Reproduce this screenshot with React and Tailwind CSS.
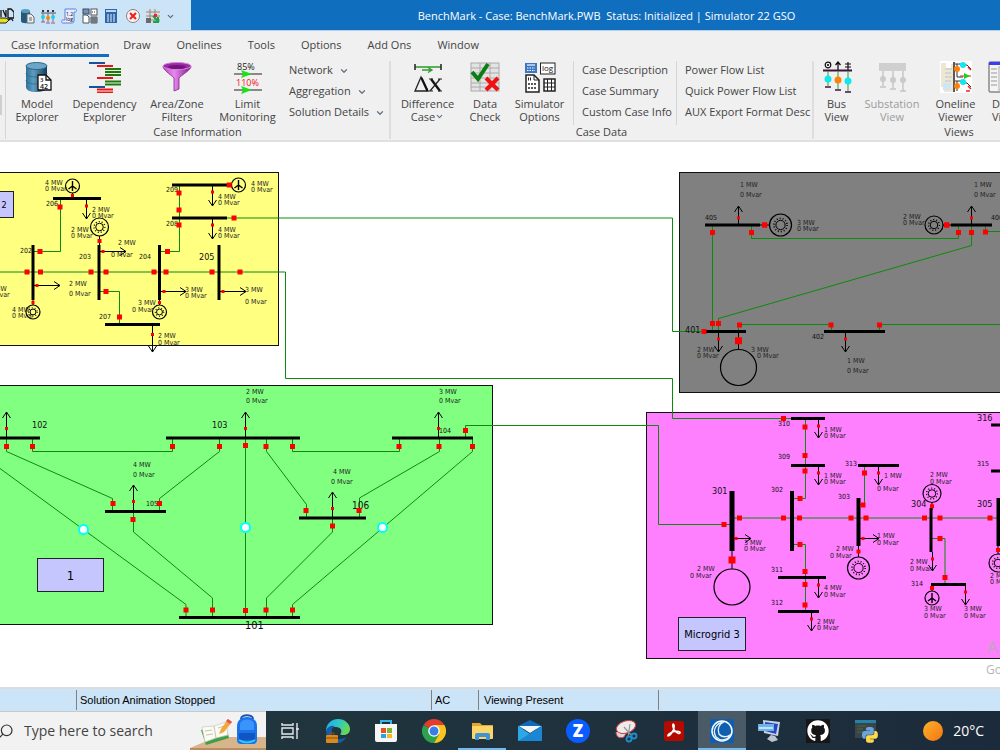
import React from "react";
import { ChevronDown, Search } from "lucide-react";
import { FaGithub } from "react-icons/fa";

/* ---------- ribbon icons ---------- */

function ModelIcon() {
  return (
    <svg viewBox="0 0 32 32" className="h-8 w-8">
      <defs>
        <linearGradient id="cyl" x1="0" x2="1">
          <stop offset="0" stopColor="#2f7199" />
          <stop offset=".35" stopColor="#5f9cc0" />
          <stop offset="1" stopColor="#123a57" />
        </linearGradient>
      </defs>
      <path d="M5 5v21c0 3 4 5 10 5s11-2 11-5V5z" fill="url(#cyl)" />
      <ellipse cx="15.500" cy="5" rx="10.500" ry="3.500" fill="#6ba6c8" stroke="#2b6588" />
      <path d="M5 12c0 3 5 4 10 4s11-1 11-4M5 19c0 3 5 4 10 4s11-1 11-4" fill="none" stroke="#2b6588" strokeWidth=".7" />
      <path d="M17 14h8l5 5v10H17z" fill="#fff" stroke="#111" strokeWidth="1.300" />
      <path d="M25 14v5h5" fill="none" stroke="#111" strokeWidth="1.300" />
      <text x="19" y="21" fontSize="6" fontWeight="600" fill="#111">3</text>
      <text x="19" y="28" fontSize="7" fontWeight="600" fill="#111">42</text>
    </svg>
  );
}

function DependencyIcon() {
  return (
    <svg viewBox="0 0 32 32" className="h-8 w-8">
      <path d="M0 2h16M0 26h16" stroke="#15539e" strokeWidth="2" />
      <path d="M8 5h16M8 17h16M8 28.500h16M8 31.500h16" stroke="#f01414" strokeWidth="2" />
      <path d="M16 8h16M16 11h16M16 14h16M16 20.500h16M16 23.500h16" stroke="#1f7a0c" strokeWidth="2" />
    </svg>
  );
}

function FunnelIcon() {
  return (
    <svg viewBox="0 0 32 32" className="h-8 w-8">
      <defs>
        <linearGradient id="funnel" x1="0" x2="1">
          <stop offset="0" stopColor="#c04cc8" />
          <stop offset=".4" stopColor="#e58aea" />
          <stop offset="1" stopColor="#7d1c8c" />
        </linearGradient>
      </defs>
      <path d="M2 5c0 4 7 8 11 12v13l5-2V17c4-4 12-8 12-12z" fill="url(#funnel)" stroke="#86208f" strokeWidth=".8" />
      <ellipse cx="16" cy="5" rx="14" ry="3.500" fill="#9a2aa6" stroke="#d884df" />
      <ellipse cx="16" cy="6" rx="9" ry="2" fill="#74127f" />
    </svg>
  );
}

function LimitIcon() {
  return (
    <svg viewBox="0 0 32 32" className="h-8 w-8 overflow-visible">
      <text x="5" y="9" fontSize="9" fill="#222">85%</text>
      <path d="M2 13h28M2 29h28" stroke="#222" />
      <path d="M9 9l11 4-11 4 2-4zM9 25l11 4-11 4 2-4z" fill="#1de01d" />
      <text x="4" y="25" fontSize="9" fill="#f01414">110%</text>
    </svg>
  );
}

function DifferenceIcon() {
  return (
    <svg viewBox="0 0 32 32" className="h-8 w-8">
      <path d="M3 6h26" stroke="#2c9a2c" strokeWidth="1.500" />
      <path d="M3 3v6M29 3v6" stroke="#222" strokeWidth="1.500" />
      <path d="M10 9h9M16 6.500l4 2.500-4 2.500" fill="none" stroke="#2c9a2c" strokeWidth="1.300" />
      <path d="M3 30l6-14 7 14z" fill="none" stroke="#222" strokeWidth="1.300" />
      <path d="M9.500 17l6 13" stroke="#111" strokeWidth="2.200" />
      <path d="M19 18l9 12" stroke="#111" strokeWidth="2.400" />
      <path d="M28 18L18 30M17 30h4M26 30h4M17 18h4M26 18h4" stroke="#222" strokeWidth="1.200" />
    </svg>
  );
}

function DataCheckIcon() {
  return (
    <svg viewBox="0 0 32 32" className="h-8 w-8">
      <rect x="2" y="2" width="28" height="28" fill="#e3e3e3" stroke="#aaa" />
      <path d="M2 7h28M2 12h28M2 17h28M2 22h28M2 26h28M11 2v28M21 2v28" stroke="#aaa" />
      <path d="M3 11l6 7L19 3" fill="none" stroke="#0b7d12" strokeWidth="4" />
      <path d="M17 17l12 12M29 17L17 29" stroke="#f01010" strokeWidth="4" />
    </svg>
  );
}

function SimulatorOptionsIcon() {
  return (
    <svg viewBox="0 0 32 32" className="h-8 w-8">
      <rect x="1" y="2" width="12" height="10" fill="#3e76c4" />
      <path d="M3 4h8" stroke="#cfe2fb" strokeWidth="1.500" />
      <path d="M3 7h8M3 9.500h8" stroke="#fff" strokeDasharray="1.500 1" />
      <rect x="16.500" y="2" width="14.500" height="11" fill="#fff" stroke="#222" />
      <text x="18" y="10" fontSize="8" fill="#111">log</text>
      <path d="M2 14h8l5 5v12H2z" fill="#fff" stroke="#222" strokeWidth="1.500" />
      <path d="M10 14v5h5" fill="none" stroke="#222" />
      <path d="M4 23h8M4 27h8" stroke="#222" strokeWidth="1.500" strokeDasharray="2 1" />
      <path d="M4 18h4" stroke="#222" strokeWidth="3" strokeDasharray="1 1" />
      <rect x="20" y="18" width="11" height="12" fill="#fff" stroke="#222" strokeWidth="1.500" />
      <path d="M20 22h11M20 26h11M23.500 18v12M27.500 18v12" stroke="#222" />
    </svg>
  );
}

function BusIcon() {
  return (
    <svg viewBox="0 0 32 32" className="h-8 w-8">
      <circle cx="7" cy="4" r="2.800" fill="none" stroke="#111" strokeWidth="1.200" />
      <circle cx="7" cy="4" r="1" />
      <path d="M17 9V1M14.500 4L17 1l2.500 3" fill="none" stroke="#111" strokeWidth="1.300" />
      <path d="M27 9V1M24 3h6M24 6h6" stroke="#111" strokeWidth="1.200" />
      <path d="M2 9.500h29" stroke="#43123f" strokeWidth="2" />
      <path d="M7 10v15M17 10v18M27 10v20" stroke="#2aa32a" />
      <path d="M4 26h6M14 29h6M24 31h6" stroke="#43123f" strokeWidth="1.500" />
      <circle cx="7" cy="18" r="3.500" fill="#12e6f0" />
      <circle cx="17" cy="19" r="3.500" fill="#ff8208" />
      <circle cx="27" cy="20" r="3.500" fill="#12e6f0" />
    </svg>
  );
}

function SubstationIcon() {
  return (
    <svg viewBox="0 0 32 32" className="h-8 w-8">
      <rect x="3" y="2" width="27" height="8" fill="#cfcfcf" />
      <path d="M7 10v15M17 10v17M27 10v20M4 26h6M14 28h6M24 30h6" stroke="#c4c4c4" strokeWidth="1.400" />
      <g fill="#cacaca">
        <circle cx="7" cy="18" r="3" />
        <circle cx="17" cy="19" r="3" />
        <circle cx="27" cy="19" r="3" />
      </g>
    </svg>
  );
}

function OnelineIcon() {
  return (
    <svg viewBox="0 0 32 32" className="h-8 w-8">
      <rect width="32" height="32" fill="#fff" />
      <path d="M1 2h5v5h5v-4h2v28H4v-5H1z" fill="#eee7d3" />
      <path d="M5 8h7M5 12h6M5 16h7M5 20h6" stroke="#b9c4cf" />
      <rect x="3" y="22" width="8" height="7" fill="#cfe5f5" />
      <path d="M14 1v30" stroke="#222" strokeWidth="1.500" />
      <path d="M15 3h6M17 3v13h6M15 20h6M17 20v10M24 4h3l4 4M24 22h3l4 4" fill="none" stroke="#333" />
      <circle cx="17" cy="8" r="3" fill="#ff8208" />
      <circle cx="23" cy="4" r="3" fill="#12e6f0" />
      <circle cx="17" cy="25" r="3" fill="#ff8208" />
      <circle cx="23" cy="21" r="3" fill="#12e6f0" />
      <path d="M20 15h11" stroke="#e22" />
      <path d="M24 12l6 3-6 3z" fill="#1dd01d" />
      <path d="M28 6l3 3M28 25l3 3M26 30h4" stroke="#e22" strokeWidth="1.500" />
    </svg>
  );
}

function DataViewIcon() {
  return (
    <svg viewBox="0 0 32 32" className="h-8 w-8">
      <rect x="1" y="1" width="30" height="30" rx="1" fill="#f4f4f4" stroke="#555" />
      <rect x="1" y="1" width="30" height="3" fill="#3c3cf0" />
      <path d="M3 8h6M3 12h6M3 16h6M3 20h6M3 24h6" stroke="#999" />
      <rect x="11" y="6" width="18" height="23" fill="#fff" stroke="#aaa" />
    </svg>
  );
}

/* ---------- quick access icons ---------- */

const QUICK_ICONS = [
  {
    name: "Open case",
    art: (
      <>
        <path d="M1 2v7M3 2v7M5 2l3 7M8 2v7M10 1h3l3 3v6h-6z" fill="none" stroke="#111" strokeWidth="1.300" />
        <path d="M1 10h7l3 2-3 3H1z" fill="#e6df1c" stroke="#222" />
        <path d="M11 12c2-2 3-1 4 1" fill="none" stroke="#111" strokeWidth="1.300" />
      </>
    ),
  },
  {
    name: "Model explorer",
    art: (
      <>
        <path d="M2 3v10c0 3 9 3 9 0V3z" fill="#24597b" />
        <ellipse cx="6.500" cy="3" rx="4.500" ry="2" fill="#5c9bc0" />
        <path d="M8 6h4l3 3v6H8z" fill="#e9eef2" stroke="#666" />
        <path d="M10 10h3M10 12h3" stroke="#666" />
      </>
    ),
  },
  {
    name: "Bus view",
    art: (
      <>
        <path d="M3 4V1M8 4V1M13 4V1" stroke="#333" strokeWidth="2" strokeDasharray="2 1" />
        <path d="M1 5h15" stroke="#555" />
        <path d="M3 5v9M8 5v9M13 5v9M1 14h4M6 15h4M11 15h4" stroke="#8d5a86" />
        <circle cx="3" cy="9" r="2" fill="#12d6e6" />
        <circle cx="8" cy="10" r="2" fill="#ff8208" />
        <circle cx="13" cy="9" r="2" fill="#12d6e6" />
      </>
    ),
  },
  {
    name: "Log",
    art: (
      <>
        <path d="M4 1h10c2 0 2 3 0 3h-1v9c0 2-2 2-2 2H2c-2 0-2-3 0-3h2z" fill="#e7edff" stroke="#5f7fe0" />
        <text x="5" y="8" fontSize="5">1.2</text>
        <text x="5" y="13" fontSize="5">log</text>
      </>
    ),
  },
  {
    name: "Simulator options",
    art: (
      <>
        <rect x="1" y="1" width="6" height="5" fill="#6c93c4" stroke="#445" />
        <rect x="9" y="1" width="6" height="6" fill="#fff" stroke="#555" />
        <path d="M10 4h4" stroke="#333" strokeDasharray="1 1" />
        <path d="M1 7h4l2 2v6H1z" fill="#fff" stroke="#555" />
        <path d="M9 9h6v6H9zM9 11h6M9 13h6M11 9v6M13 9v6" fill="none" stroke="#555" />
      </>
    ),
  },
  {
    name: "Calculator",
    art: (
      <>
        <rect x="2" y="1" width="12" height="14" fill="#2f67ad" />
        <path d="M3 3h10" stroke="#bcd8f3" strokeWidth="2" />
        <path d="M4 7h9M4 9h9M4 11h9M4 13h9" stroke="#e8f2fc" strokeDasharray="2 1" />
      </>
    ),
  },
  {
    name: "Abort",
    art: (
      <>
        <circle cx="9" cy="8" r="6.500" fill="#fdf3f1" stroke="#8a7f7f" />
        <path d="M6 5l6 6M12 5l-6 6" stroke="#ee1c1c" strokeWidth="2" />
      </>
    ),
  },
  {
    name: "Contour",
    art: (
      <>
        <rect x="1" y="1" width="14" height="14" fill="#dedede" />
        <path d="M1 4h14M1 8h14M1 12h14M5 1v14M10 1v14" stroke="#8a8a8a" />
        <path d="M1 10h5v5H1z" fill="#6a6a6a" />
        <path d="M8 8l6 6M13 9v5H8" stroke="#19a54a" strokeWidth="2" fill="none" />
        <rect x="9" y="6" width="3" height="3" fill="#e23" />
      </>
    ),
  },
];

/* ---------- ribbon ---------- */

const TABS = ["Case Information", "Draw", "Onelines", "Tools", "Options", "Add Ons", "Window"];

function RibbonButton({ icon, top, bottom, width, muted, arrow }) {
  return (
    <button
      type="button"
      className={`flex shrink-0 flex-col items-center text-center leading-[13px] ${width} ${
        muted ? "text-[#9b9b9b]" : ""
      }`}
    >
      {icon}
      <span className="mt-1">{top}</span>
      <span className="flex items-center">
        {bottom}
        {arrow && <ChevronDown size={9} strokeWidth={3} className="text-gray-500" />}
      </span>
    </button>
  );
}

function RibbonList({ items, arrows, className }) {
  return (
    <div className={`flex shrink-0 flex-col items-start ${className}`}>
      {items.map((item) => (
        <button key={item} type="button" className="flex h-[21px] items-center whitespace-nowrap pb-0.5">
          {item}
          {arrows && <ChevronDown size={10} strokeWidth={3} className="ml-1.5 text-gray-500" />}
        </button>
      ))}
    </div>
  );
}

function RibbonGroup({ title, width, children }) {
  return (
    <section className={`flex shrink-0 flex-col border-r-2 border-[#dedede] ${width}`}>
      <div className="flex h-[64px]">{children}</div>
      <h2 className="text-center leading-[14px]">{title}</h2>
    </section>
  );
}

function Ribbon() {
  return (
    <div className="flex overflow-hidden border-b-2 border-[#e0e0e0] bg-[#f0f0f0] pt-1 pb-px">
      <div className="w-[6px] shrink-0 border-r border-[#d5d5d5]">
        <div className="mt-[34px] h-5 w-[2px] bg-[#cfcfcf]" />
      </div>
      <RibbonGroup title="Case Information" width="w-[385px]">
        <RibbonButton icon={<ModelIcon />} top="Model" bottom="Explorer" width="w-[62px]" />
        <RibbonButton icon={<DependencyIcon />} top="Dependency" bottom="Explorer" width="w-[73px]" />
        <RibbonButton icon={<FunnelIcon />} top="Area/Zone" bottom="Filters" width="w-[72px]" />
        <RibbonButton icon={<LimitIcon />} top="Limit" bottom="Monitoring" width="w-[69px]" />
        <RibbonList items={["Network", "Aggregation", "Solution Details"]} arrows className="pl-[7px]" />
      </RibbonGroup>
      <RibbonGroup title="Case Data" width="w-[423px]">
        <RibbonButton icon={<DifferenceIcon />} top="Difference" bottom="Case" arrow width="w-[73px]" />
        <RibbonButton icon={<DataCheckIcon />} top="Data" bottom="Check" width="w-[42px]" />
        <RibbonButton icon={<SimulatorOptionsIcon />} top="Simulator" bottom="Options" width="w-[67px]" />
        <RibbonList
          items={["Case Description", "Case Summary", "Custom Case Info"]}
          className="w-[103px] border-l border-[#d5d5d5] pl-2"
        />
        <RibbonList
          items={["Power Flow List", "Quick Power Flow List", "AUX Export Format Desc"]}
          className="border-l border-[#d5d5d5] pl-2"
        />
      </RibbonGroup>
      <RibbonGroup title="Views" width="w-[292px]">
        <RibbonButton icon={<BusIcon />} top="Bus" bottom="View" width="w-[45px]" />
        <RibbonButton icon={<SubstationIcon />} top="Substation" bottom="View" width="w-[66px]" muted />
        <RibbonButton icon={<OnelineIcon />} top="Oneline" bottom="Viewer" width="w-[61px]" />
        <RibbonButton icon={<DataViewIcon />} top="Data" bottom="View" width="w-[36px]" />
      </RibbonGroup>
    </div>
  );
}

/* ---------- oneline diagram ---------- */

// microgrid areas: x, y, width, height, fill
const AREAS = [
  [-10, 172, 289, 173, "#ffff80"],
  [679, 172, 340, 220, "#808080"],
  [-10, 385, 503, 239, "#80ff80"],
  [646, 412, 380, 246, "#ff80ff"],
];

const LINES = [
  "M0 272H285.500V378.500H672.500V418.500H792",
  "M226 218H672.500V331.500H712",
  "M60.500 199V251.500H33",
  "M179.500 185V251.500H160",
  "M99 291.500H119.500V324",
  "M712.500 225V331",
  "M751.500 225V238.500H958.500V225",
  "M971.500 225V245.500L718.500 318.500V331",
  "M738.500 331V324.500H831.500V331",
  "M879.500 331V324.500H1000",
  "M985.500 225V231.500H1000",
  "M6.500 438V451.500L112.500 498.500V511",
  "M32.500 438V451.500H172.500V438",
  "M219.500 438V451.500L159.500 498.500V511",
  "M245.500 438V617",
  "M0 468.500L186 604.500V617",
  "M133.500 511V532L212.500 598V617",
  "M266.500 438V451.500L306.500 504.500V518",
  "M292.500 438V451.500H399.500V438",
  "M439.500 438V451.500L359.500 498V518",
  "M472.500 438V451.500L292.500 604.500V617",
  "M332.500 518V532L266.500 598V617",
  "M465.500 438V425.500H658.500V524.500H732",
  "M805.500 418V498.500H792",
  "M732 518H1000",
  "M792 544.500H805.500V611",
  "M864.500 465V504.500H858",
  "M931 538.500H945V584",
];

// x1, y1, x2, y2, thickness
const BUSES = [
  [53, 198.5, 101, 198.5, 3],
  [172, 185, 227, 185, 3],
  [172, 218, 227, 218, 3],
  [33, 245, 33, 300, 3],
  [99, 245, 99, 300, 3],
  [159.5, 245, 159.5, 300, 3],
  [219, 245, 219, 300, 3],
  [105, 324.5, 160, 324.5, 3],
  [705, 225, 760, 225, 3],
  [951, 225, 992, 225, 3],
  [706, 331.5, 746, 331.5, 3],
  [824, 331.5, 885, 331.5, 3],
  [0, 438, 40, 438, 3],
  [166, 438, 300, 438, 3],
  [392, 438, 473, 438, 3],
  [105, 511.5, 166, 511.5, 3],
  [299, 518, 366, 518, 3],
  [179, 617.5, 300, 617.5, 3],
  [791, 418.5, 825, 418.5, 3],
  [791, 465.5, 825, 465.5, 3],
  [792, 491, 792, 551, 4],
  [732, 491, 732, 551, 5],
  [778, 577.5, 826, 577.5, 3],
  [778, 611.5, 819, 611.5, 3],
  [858, 465.5, 899, 465.5, 3],
  [858.5, 498, 858.5, 546, 4],
  [931, 508, 931, 552, 3],
  [931, 584.5, 966, 584.5, 3],
  [999, 498, 999, 546, 5],
  [991, 425, 1000, 425, 3],
  [991, 471, 1000, 471, 3],
];

const BREAKERS = [
  [60, 207], [40, 251.5], [27, 272], [40.5, 272], [91, 272], [106, 272], [154, 272], [166, 272],
  [212, 272], [240, 272], [179, 193], [179, 210], [179, 225], [167.5, 251.5], [234, 218],
  [106, 291.5], [119.5, 317], [712.5, 232.5], [751.5, 232.5], [764.5, 225], [946.5, 225],
  [958.5, 232.5], [971.5, 232.5], [985.5, 232], [712.5, 323.5], [718.5, 323.5], [704, 331.5],
  [739.5, 325], [831, 325], [879.5, 325], [6.5, 446.5], [32.5, 446.5], [172.5, 446.5],
  [219.5, 446.5], [245.5, 445.5], [266, 446.5], [292.5, 446.5], [399, 446.5], [439, 446.5],
  [472.5, 446.5], [465.5, 430.5], [113, 503.5], [159.5, 503.5], [133, 519.5], [306, 510.5],
  [359, 510.5], [332.5, 526], [186, 610], [212.5, 610], [245.5, 610.5], [266, 610], [292.5, 610],
  [783.5, 418.5], [805, 427], [805, 455.5], [805, 471], [800, 498.5], [739.5, 518], [783.5, 518],
  [799.5, 518], [724, 524.5], [800, 544.5], [805, 571.5], [805, 584.5], [805, 605], [864.5, 473],
  [863, 505], [851, 518], [866, 518], [924.5, 518], [940, 518], [990, 518], [940, 538.5], [945, 577.5],
];

// load arrows: bus end x, y, tip x, y
const LOADS = [
  [86.5, 199, 86.5, 219],
  [212.5, 185, 212.5, 206],
  [212.5, 218, 212.5, 239],
  [33, 285.5, 60, 285.5],
  [99, 251.5, 126, 251.5],
  [160, 291.5, 186, 291.5],
  [219, 291.5, 246, 291.5],
  [152.5, 325, 152.5, 352],
  [738.5, 225, 738.5, 206],
  [971.5, 225, 971.5, 206],
  [718.5, 332, 718.5, 352],
  [845.5, 332, 845.5, 352],
  [6.5, 438, 6.5, 412],
  [245.5, 438, 245.5, 412],
  [438.5, 438, 438.5, 412],
  [133.5, 511, 133.5, 485],
  [332.5, 518, 332.5, 492],
  [818.5, 419, 818.5, 438],
  [818.5, 466, 818.5, 485],
  [732, 538.5, 751, 538.5],
  [818.5, 578, 818.5, 598],
  [811.5, 612, 811.5, 631],
  [878.5, 466, 878.5, 485],
  [859, 538.5, 879, 538.5],
  [932.5, 552, 932.5, 571],
  [965.5, 585, 965.5, 605],
];

// generators: type, x, y, radius, bus side x, y, breaker size
const GENERATORS = [
  ["wind", 72.5, 186, 7, 72.5, 198, 3],
  ["wind", 238.5, 185, 7, 227, 185, 5],
  ["solar", 99.5, 227, 9, 99.5, 246, 4],
  ["solar", 33, 312, 7, 33, 300, 3],
  ["solar", 159.5, 312, 7, 159.5, 300, 3],
  ["solar", 780.5, 225, 11, 760, 225, 5],
  ["solar", 934, 225, 9, 951, 225, 5],
  ["grid", 738.5, 367.5, 18, 738.5, 332, 7],
  ["grid", 732, 587, 18, 732, 551, 7],
  ["solar", 858.5, 568, 11, 858.5, 546, 4],
  ["solar", 932, 493.5, 9, 932, 510, 4],
  ["wind", 932, 598, 7, 932, 585, 4],
  ["solar", 998, 563, 9, 998, 546, 4],
];

// bus numbers: text, x, middle y, font size
const BUS_NAMES = [
  ["206", 46, 203, 7], ["209", 166, 189, 7], ["208", 166, 223, 7], ["202", 20, 250, 7],
  ["203", 79, 256, 7], ["204", 139, 256, 7], ["205", 199, 257, 9], ["207", 99, 316, 7],
  ["405", 705, 217, 7], ["401", 685, 330, 9], ["402", 812, 336, 7], ["406", 991, 217, 7],
  ["102", 32, 425, 9], ["103", 212, 425, 9], ["104", 439, 430, 7], ["105", 146, 503, 7],
  ["106", 352, 505, 10], ["101", 245, 625, 11], ["310", 778, 423, 7], ["309", 778, 456, 7],
  ["302", 771, 489, 7], ["301", 712, 491, 9], ["311", 771, 569, 7], ["312", 771, 602, 7],
  ["313", 845, 463, 7], ["303", 838, 496, 7], ["304", 911, 504, 9], ["305", 977, 504, 9],
  ["316", 977, 418, 9], ["315", 977, 463, 7], ["314", 911, 583, 7],
];

// power readings: MW value, x, middle y, then x and middle y of the Mvar line
const READINGS = [
  [4, 45, 183, 45, 189], [4, 251, 184, 251, 190], [2, 92, 210, 92, 216], [2, 71, 230, 71, 236],
  [4, 218, 197, 218, 203], [4, 218, 230, 218, 236], [2, 118, 243, 111, 255], [2, 69, 284, 69, 294],
  [3, -11, 289, -12, 295], [4, 12, 310, 12, 316], [3, 138, 303, 132, 310], [3, 185, 290, 185, 296],
  [3, 245, 290, 245, 302], [2, 158, 336, 158, 343], [1, 740, 185, 740, 195], [1, 974, 185, 974, 195],
  [3, 797, 223, 797, 229], [2, 903, 217, 903, 223], [2, 697, 350, 697, 356], [3, 751, 350, 757, 356],
  [1, 847, 361, 847, 371], [2, 246, 392, 246, 401], [3, 439, 392, 439, 401], [4, 133, 465, 133, 475],
  [4, 333, 472, 331, 482], [1, 824, 430, 824, 436], [1, 824, 476, 824, 482], [3, 744, 543, 744, 549],
  [2, 697, 569, 690, 576], [4, 824, 588, 824, 595], [2, 817, 622, 817, 628], [1, 884, 476, 877, 489],
  [2, 930, 475, 930, 482], [1, 877, 536, 877, 543], [2, 836, 549, 830, 556], [2, 910, 562, 910, 569],
  [3, 924, 609, 924, 616], [3, 964, 609, 964, 616], [2, 990, 576, 990, 582],
];

function Load({ x1, y1, x2, y2 }) {
  const dx = Math.sign(x2 - x1);
  const dy = Math.sign(y2 - y1);
  const len = Math.abs(x2 - x1) + Math.abs(y2 - y1);
  const at = dx ? 4 : len > 22 ? 9.5 : 7;
  // two barbs, 6 back from the tip and 4 to each side
  const bx = x2 - dx * 6;
  const by = y2 - dy * 6;
  return (
    <g>
      <path
        d={`M${x1} ${y1}L${x2} ${y2}M${bx + dy * 4} ${by + dx * 4}L${x2} ${y2}L${bx - dy * 4} ${by - dx * 4}`}
        fill="none"
        stroke="#000"
      />
      <rect x={x1 + dx * at - 1.5} y={y1 + dy * at - 1.5} width="3" height="3" fill="#f00" />
    </g>
  );
}

function Generator({ type, x, y, r, bx, by, size }) {
  // edge of the circle on the side of the bus
  const ex = x + Math.sign(bx - x) * r;
  const ey = y + Math.sign(by - y) * r;
  const mx = (bx + ex) / 2;
  const my = (by + ey) / 2;
  return (
    <g>
      <path d={`M${bx} ${by}L${ex} ${ey}`} stroke="#000" />
      <circle cx={x} cy={y} r={r} fill="none" stroke="#000" strokeWidth="1.200" />
      {type === "solar" && (
        <>
          <circle cx={x} cy={y} r={r * 0.42} fill="none" stroke="#000" />
          <circle cx={x} cy={y} r={r * 0.6} fill="none" stroke="#000" strokeWidth={r * 0.15} strokeDasharray="1 2" />
        </>
      )}
      {type === "wind" && (
        <path
          d={`M${x} ${y + 5}V${y - 5}M${x} ${y}L${x - 4} ${y + 3}M${x} ${y}L${x + 4} ${y + 3}`}
          stroke="#000"
          strokeWidth="1.400"
        />
      )}
      <rect x={mx - size / 2} y={my - size / 2} width={size} height={size} fill="#f00" />
    </g>
  );
}

function AreaTag({ x, y, width, height, size, children }) {
  return (
    <g>
      <rect x={x} y={y} width={width} height={height} fill="#c6c6ff" stroke="#222" />
      <text x={x + width / 2} y={y + height / 2 + size * 0.37} fontSize={size} textAnchor="middle">
        {children}
      </text>
    </g>
  );
}

function Oneline() {
  return (
    <svg
      viewBox="0 142 1000 545"
      className="block h-auto w-full bg-white font-['DejaVu_Sans_Condensed','DejaVu_Sans',sans-serif]"
      role="img"
      aria-label="Oneline diagram"
    >
      {AREAS.map(([x, y, w, h, fill]) => (
        <rect key={fill} x={x + 0.5} y={y + 0.5} width={w - 1} height={h} fill={fill} stroke="#111" />
      ))}
      <path d={LINES.join("")} fill="none" stroke="#0b8a0b" strokeWidth="1" />
      {BUSES.map(([x1, y1, x2, y2, w], i) => (
        <line key={i} x1={x1} y1={y1} x2={x2} y2={y2} stroke="#000" strokeWidth={w} />
      ))}
      {GENERATORS.map(([type, x, y, r, bx, by, size], i) => (
        <Generator key={i} type={type} x={x} y={y} r={r} bx={bx} by={by} size={size} />
      ))}
      {LOADS.map(([x1, y1, x2, y2], i) => (
        <Load key={i} x1={x1} y1={y1} x2={x2} y2={y2} />
      ))}
      {BUS_NAMES.map(([name, x, y, size]) => (
        <text key={name} x={x} y={y + size * 0.36} fontSize={size} fill="#111">
          {name}
        </text>
      ))}
      {READINGS.map(([mw, x, y, x2, y2], i) => (
        <g key={i} fontSize="7" fill="#222">
          <text x={x} y={y + 2}>{mw} MW</text>
          <text x={x2} y={y2 + 2}>0 Mvar</text>
        </g>
      ))}
      {BREAKERS.map(([x, y], i) => (
        <rect key={i} x={x - 2.5} y={y - 2.5} width="5" height="5" fill="#f00" />
      ))}
      {[[83.5, 529.5], [245.5, 527.5], [382.5, 527.5]].map(([x, y]) => (
        <circle key={x} cx={x} cy={y} r="4.500" fill="#fff" stroke="#0ff" strokeWidth="2" />
      ))}
      <AreaTag x={-5.5} y={191.5} width={19} height={26} size={9}>2</AreaTag>
      <AreaTag x={37.5} y={558.5} width={66} height={33} size={13}>1</AreaTag>
      <AreaTag x={678.5} y={617.5} width={67} height={33} size={11}>Microgrid 3</AreaTag>
      <g className="font-['Open_Sans',sans-serif]" fill="#b8a8b8">
        <text x="987" y="653" fontSize="17">A</text>
        <text x="986" y="674" fontSize="12" fill="#b5b5b5">Go</text>
      </g>
    </svg>
  );
}

/* ---------- task bar ---------- */

const PYTHON_HALF =
  "M14.25.18l.9.2.73.26.59.3.45.32.34.34.25.34.16.33.1.3.04.26.02.2-.01.13V8.5l-.05.63-.13.55-.21.46-.26.38-.3.31-.33.25-.35.19-.35.14-.33.1-.3.07-.26.04-.21.02H8.77l-.69.05-.59.14-.5.22-.41.27-.33.32-.27.35-.2.36-.15.37-.1.35-.07.32-.04.27-.02.21v3.06H3.17l-.21-.03-.28-.07-.32-.12-.35-.18-.36-.26-.36-.36-.35-.46-.32-.59-.28-.73-.21-.88-.14-1.05-.05-1.23.06-1.22.16-1.04.24-.87.32-.71.36-.57.4-.44.42-.33.42-.24.4-.16.36-.1.32-.05.24-.01h.16l.06.01h8.16v-.83H6.18l-.01-2.75-.02-.37.05-.34.11-.31.17-.28.25-.26.31-.23.38-.2.44-.18.51-.15.58-.12.64-.1.71-.06.77-.04.84-.02 1.27.05z";

const APPS = [
  {
    name: "Task view",
    art: (
      <path d="M4 4v2h11V4M4 20v-2h11v2M4 9h11v6H4zM19 4v16M18 10h3" fill="none" stroke="#e6e9ea" strokeWidth="1.400" />
    ),
  },
  {
    name: "Edge",
    art: (
      <>
        <defs>
          <linearGradient id="edge" x1="0" y1="0" x2="1" y2=".4">
            <stop offset="0" stopColor="#1fa6e8" />
            <stop offset=".5" stopColor="#2cc4cf" />
            <stop offset="1" stopColor="#66d858" />
          </linearGradient>
        </defs>
        <path d="M0 12C0 5 5 0 12 0c7 0 12 5 12 10 0 4-3 6-7 6-3 0-3-1-2-2 1-2 0-6-5-6-5 0-9 1-10 6z" fill="url(#edge)" />
        <path d="M0 12c1-4 5-6 9-5-3 1-4 4-3 8 1 5 7 7 14 3-2 4-5 6-8 6C5 24 0 19 0 12z" fill="#155cab" />
        <rect x="0" y="16" width="12" height="8" rx="1" fill="#d98a1c" />
        <path d="M4 16v-2h4v2M0 19h12" fill="none" stroke="#8a4f0a" />
      </>
    ),
  },
  {
    name: "Store",
    art: (
      <>
        <path d="M7 6V2h10v4" fill="none" stroke="#35b5e5" strokeWidth="2" />
        <path d="M1 5h22v16a2 2 0 01-2 2H3a2 2 0 01-2-2z" fill="#f6f6f6" />
        <path d="M7 9h5v5H7z" fill="#e8502a" />
        <path d="M13 9h5v5h-5z" fill="#7db52c" />
        <path d="M7 15h5v4H7z" fill="#2aa3e0" />
        <path d="M13 15h5v4h-5z" fill="#f7b72b" />
      </>
    ),
  },
  {
    name: "Chrome",
    art: (
      <>
        <path d="M12 12L1.600 6A12 12 0 0122.400 6z" fill="#e33b2e" />
        <path d="M12 12L1.600 6A12 12 0 0012 24l5.200-9z" fill="#2ba24c" />
        <path d="M12 6h10.400A12 12 0 0112 24l5.200-9z" fill="#fcc31e" />
        <circle cx="12" cy="12" r="5.800" fill="#fff" />
        <circle cx="12" cy="12" r="4.500" fill="#3b7de8" />
      </>
    ),
  },
  {
    name: "File Explorer",
    open: true,
    art: (
      <>
        <path d="M2 4h8l2 2h11v4H2z" fill="#e3a52c" />
        <rect x="2" y="7" width="21" height="13" rx="1" fill="#fbd567" />
        <path d="M5 21v-5a2 2 0 012-2h11a2 2 0 012 2v5h-4v-3H9v3z" fill="#3c93d6" />
      </>
    ),
  },
  {
    name: "Mail",
    art: (
      <>
        <path d="M0 7l12-6 12 6v3H0z" fill="#1269b8" />
        <path d="M0 7l12 8 12-8v15H0z" fill="#2ba8e6" />
        <path d="M24 7v15L0 22z" fill="#1b86d3" />
        <path d="M1 7h22l-11 7z" fill="#f3f6f8" />
      </>
    ),
  },
  {
    name: "Zoom",
    art: (
      <>
        <circle cx="12" cy="12" r="12" fill="#0b5cff" />
        <text x="12" y="18" fontSize="17" fontWeight="800" textAnchor="middle" fill="#fff">Z</text>
      </>
    ),
  },
  {
    name: "Snipping Tool",
    art: (
      <>
        <path d="M2 13c0 5 4 7 8 5l3-5" fill="#dcd6d6" stroke="#c44343" />
        <ellipse cx="12" cy="8" rx="10" ry="6" fill="#efebeb" stroke="#c44343" transform="rotate(-18 12 8)" />
        <path d="M10 8l7 8M16 5l-2 13" stroke="#8d9aa2" strokeWidth="1.200" />
        <circle cx="15" cy="20" r="2.500" fill="none" stroke="#1f8ecb" strokeWidth="1.800" />
        <circle cx="20" cy="17" r="2.500" fill="none" stroke="#1f8ecb" strokeWidth="1.800" />
      </>
    ),
  },
  {
    name: "Acrobat",
    art: (
      <>
        <rect x="2" y="2" width="20" height="20" rx="3" fill="#b30b00" />
        <path
          d="M6 17c-1-1 3-4 6-4.500s7 0 6 1.500-6-1-7-6 2-3 1 1-4 8-6 8z"
          fill="none"
          stroke="#fff"
          strokeWidth="1.500"
        />
      </>
    ),
  },
  {
    name: "PowerWorld Simulator",
    open: true,
    active: true,
    art: (
      <>
        <rect width="24" height="24" fill="#0f5fae" />
        <circle cx="12" cy="12" r="10" fill="none" stroke="#fff" strokeWidth="1.500" />
        <path d="M6 18C2 11 6 4 14 3c-5 2-7 7-5 12 3 4 8 3 11 1-2 5-9 7-14 2z" fill="none" stroke="#e6f1fa" strokeWidth="1.300" />
      </>
    ),
  },
  {
    name: "Remote Desktop",
    art: (
      <>
        <path d="M5 1l17 2-2 14-14-3z" fill="#c9d3e2" />
        <path d="M7 3l13 2-2 10-11-3z" fill="#2347c9" />
        <path d="M13 16l4 1 3 4-6 2-5-3z" fill="#bcc5cf" />
        <rect x="0" y="5" width="16" height="7" fill="#6db3ea" />
        <path d="M1 9h14" stroke="#e6f2fc" strokeWidth="1.500" />
      </>
    ),
  },
  {
    name: "GitHub",
    art: (
      <>
        <rect width="24" height="24" fill="#171515" />
        <FaGithub x="1" y="1" size={22} color="#fff" />
      </>
    ),
  },
  {
    name: "IDLE",
    art: (
      <>
        <rect x="1" y="1" width="21" height="18" fill="#3a4548" />
        <rect x="1" y="1" width="21" height="3" fill="#2583a8" />
        <path d="M3 7h9M3 10h6M3 13h7" stroke="#456b45" />
        <g transform="translate(8 8) scale(.66)">
          <path d={PYTHON_HALF} fill="#6aa5dc" />
          <path d={PYTHON_HALF} fill="#ffd94a" transform="rotate(180 12 12)" />
        </g>
      </>
    ),
  },
];

function SearchArt() {
  return (
    <svg viewBox="0 0 76 39" className="h-[39px] w-[76px] shrink-0">
      <path d="M0 36l26-11h50v14H0z" fill="#d8b48c" />
      <path d="M0 36h76v3H0z" fill="#b98d63" />
      <path d="M11 18l25-5 3 13-23 7z" fill="#3f9f45" />
      <path d="M12 15l12-1 12-4 2 13-12 3-11 4z" fill="#fbfaf3" stroke="#c9c9bd" strokeWidth=".7" />
      <path d="M24 14l2 12M15 19l7-1M16 23l7-1M28 16l6-2" stroke="#b5b5a6" strokeWidth=".8" />
      <path d="M29 22l2-5L38 7l4 3-8 10z" fill="#f2a73c" />
      <path d="M36 9l2-2 4 3-2 2z" fill="#e5534c" />
      <path d="M51 7c0-5 12-5 12 0" fill="none" stroke="#1a55b5" strokeWidth="2" />
      <path d="M47 14c0-12 20-12 20 0v14c0 3-2 4-4 4H51c-2 0-4-1-4-4z" fill="#1a73e8" />
      <path d="M50 12c1-6 13-6 14 0v6H50z" fill="#3b94fb" />
      <path d="M49 21h16v7H49z" fill="#0f56c4" />
      <path d="M49 28c5 3 11 3 16 0" stroke="#36d1f0" fill="none" strokeWidth="1.500" />
    </svg>
  );
}

function TaskBar() {
  return (
    <footer className="flex h-[39px] shrink-0 overflow-hidden bg-gradient-to-r from-[#21393f] to-[#1c2b3b] text-sm text-white">
      <label className="flex w-[266px] shrink-0 items-center border-t border-[#c9c9c9] bg-[#f2f2f2] text-[#333]">
        <Search size={16} strokeWidth={1.8} className="-ml-0.5 -scale-x-100" />
        <input
          type="text"
          aria-label="Search"
          placeholder="Type here to search"
          className="ml-[10px] min-w-0 flex-1 bg-transparent text-sm outline-none placeholder:text-[#444]"
        />
        <SearchArt />
      </label>
      <nav className="flex">
        {APPS.map((app) => (
          <button
            key={app.name}
            type="button"
            aria-label={app.name}
            className={`flex w-12 items-center justify-center border-y-2 border-t-transparent ${
              app.open ? "border-b-[#76b9ed]" : "border-b-transparent"
            } ${app.active ? "bg-[#4a5a66]" : ""}`}
          >
            <svg viewBox="0 0 24 24" className="h-6 w-6">
              {app.art}
            </svg>
          </button>
        ))}
      </nav>
      <button type="button" className="mr-4 ml-auto flex items-center gap-[10px]">
        <span className="h-5 w-5 rounded-full bg-gradient-to-br from-[#fbb22c] to-[#f2740e]" />
        20°C
      </button>
    </footer>
  );
}

export default function App() {
  return (
    <div className="flex min-h-screen flex-col overflow-hidden bg-white font-['Open_Sans',sans-serif] text-[11px] text-[#444]">
      <header className="flex h-[30px] shrink-0 bg-[#106ebe]">
        <div className="flex w-[191px] shrink-0 items-center gap-[5px] overflow-hidden bg-[#cce4f7] pt-0.5">
          {QUICK_ICONS.map((icon) => (
            <button key={icon.name} type="button" aria-label={icon.name} className="h-4 w-4 shrink-0 first:-ml-[2px]">
              <svg viewBox="0 0 16 16" className="h-4 w-4">
                {icon.art}
              </svg>
            </button>
          ))}
          <ChevronDown size={9} strokeWidth={3} className="shrink-0 text-[#666]" />
        </div>
        <h1 className="flex-1 self-center pt-0.5 pl-[22px] text-center whitespace-pre text-white">
          {"BenchMark - Case: BenchMark.PWB  Status: Initialized | Simulator 22 GSO"}
        </h1>
      </header>

      <nav className="flex h-[27px] shrink-0 gap-[26px] border-t border-[#b5cfe6] bg-[#f0f0f0]">
        {TABS.map((tab, i) => (
          <button
            key={tab}
            type="button"
            className={`border-b-[3px] pt-[5px] whitespace-nowrap ${
              i === 0 ? "-mr-3 border-b-[#106ebe] pr-[10px] pl-[11px]" : "border-b-transparent"
            }`}
          >
            {tab}
          </button>
        ))}
      </nav>

      <Ribbon />

      <main className="flex-1">
        <Oneline />
      </main>

      <div className="flex h-6 shrink-0 items-center border-t-2 border-[#dcdcdc] bg-[#cce4f7] text-[11px] text-black font-['Liberation_Sans',sans-serif]">
        <span className="h-5 w-[77px] shrink-0 border-r border-[#808080]" />
        <span className="flex h-5 w-[355px] shrink-0 items-center border-r border-[#808080] pl-[3px]">
          Solution Animation Stopped
        </span>
        <span className="flex h-5 w-[47px] shrink-0 items-center border-r border-[#808080] pl-[3px]">AC</span>
        <span className="flex h-5 w-[180px] shrink-0 items-center border-r border-[#808080] pl-[5px]">
          Viewing Present
        </span>
      </div>

      <TaskBar />
    </div>
  );
}
